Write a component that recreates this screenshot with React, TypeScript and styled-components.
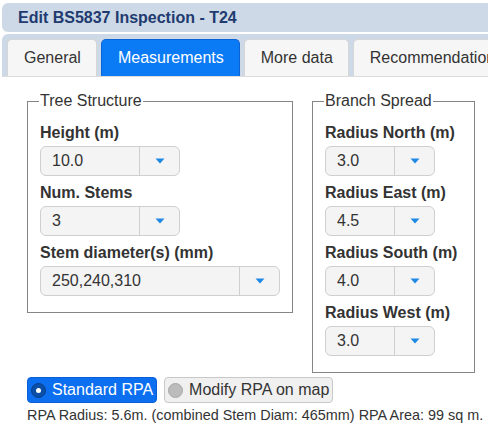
import React from "react";
import styled, { createGlobalStyle } from "styled-components";

const Global = createGlobalStyle`
  html, body { margin: 0; padding: 0; background: #fff; }
  body { font-family: "Liberation Sans", Arial, sans-serif; color: #333; width: 488px; height: 437px; overflow: hidden; }
  * { box-sizing: border-box; }
`;

const Page = styled.div`
  width: 488px;
  padding-left: 2px;
`;

const Header = styled.div`
  margin-top: 3px;
  height: 29px;
  line-height: 29px;
  padding-left: 16px;
  background: #cdd9e7;
  border-radius: 6px 0 0 6px;
  color: #1f3b70;
  font-weight: bold;
  font-size: 16px;
  white-space: nowrap;
`;

const TabBar = styled.div`
  margin-top: 2px;
  height: 43px;
  padding: 5px 0 0 5px;
  background: #cdd9e7;
  border-radius: 6px 0 0 0;
  display: flex;
  gap: 4px;
  overflow: hidden;
  border-bottom: 1px solid #dcdcdc;
`;

const Tab = styled.div<{ $active?: boolean }>`
  flex: none;
  height: 38px;
  line-height: 36px;
  padding: 0 15px 0 16px;
  font-size: 16px;
  white-space: nowrap;
  border-radius: 5px 5px 0 0;
  border: 1px solid ${(p) => (p.$active ? "#0a64d8" : "#d6d6d6")};
  border-bottom: none;
  background: ${(p) => (p.$active ? "#0b7bf5" : "#f6f6f6")};
  color: ${(p) => (p.$active ? "#fff" : "#333")};
`;

const Content = styled.div`
  padding: 15px 0 0 25px;
`;

const Columns = styled.div`
  display: flex;
  align-items: flex-start;
  gap: 19px;
`;

const Fieldset = styled.fieldset<{ $w: number }>`
  width: ${(p) => p.$w}px;
  margin: 0;
  padding: 13px 12px 16px 12px;
  border: 1px solid #858585;
  display: flex;
  flex-direction: column;
  gap: 7px;
`;

const Legend = styled.legend`
  padding: 0 1px;
  margin-left: -1px;
  font-size: 16px;
  line-height: 18px;
  color: #333;
`;

const Field = styled.div`
  display: flex;
  flex-direction: column;
  align-items: flex-start;
  gap: 3px;
`;

const Label = styled.div`
  font-size: 16px;
  line-height: 20px;
  font-weight: bold;
  color: #333;
  white-space: nowrap;
`;

const Select = styled.div<{ $w: number }>`
  width: ${(p) => p.$w}px;
  height: 30px;
  display: flex;
  border: 1px solid #cfcfcf;
  border-radius: 6px;
  background: #f4f4f4;
`;

const Value = styled.div`
  flex: 1;
  padding-left: 11px;
  line-height: 28px;
  font-size: 16px;
  color: #333;
  border-right: 1px solid #cfcfcf;
`;

const Drop = styled.div`
  width: 39px;
  display: flex;
  align-items: center;
  justify-content: center;
`;

const Arrow = () => (
  <svg width="10" height="6" viewBox="0 0 10 6">
    <path d="M0.5 0.5 H9.5 L5 5.5 Z" fill="#1e88e5" />
  </svg>
);

const RadioRow = styled.div`
  display: flex;
  gap: 7px;
  margin-top: 4px;
`;

const RadioBtn = styled.div<{ $on?: boolean }>`
  height: 26px;
  display: flex;
  align-items: center;
  gap: 6px;
  padding: 0 3px 0 3px;
  border-radius: 4px;
  font-size: 16px;
  white-space: nowrap;
  border: 1px solid ${(p) => (p.$on ? "#0a5fd6" : "#c8c8c8")};
  background: ${(p) => (p.$on ? "#0b6ff0" : "#f0f0f0")};
  color: ${(p) => (p.$on ? "#fff" : "#333")};
`;

const Dot = styled.span<{ $on?: boolean }>`
  width: 15px;
  height: 15px;
  border-radius: 50%;
  flex: none;
  display: flex;
  align-items: center;
  justify-content: center;
  background: ${(p) => (p.$on ? "#0a4fa8" : "#bcbcbc")};
  border: 1px solid ${(p) => (p.$on ? "#083f8a" : "#a9a9a9")};
  &::after {
    content: "";
    display: ${(p) => (p.$on ? "block" : "none")};
    width: 5px;
    height: 5px;
    border-radius: 50%;
    background: #fff;
  }
`;

const Summary = styled.div`
  margin-top: 4px;
  font-size: 14.4px;
  line-height: 16px;
  color: #333;
  white-space: nowrap;
`;

const SelectField = ({ label, value, w }: { label: string; value: string; w: number }) => (
  <Field>
    <Label>{label}</Label>
    <Select $w={w}>
      <Value>{value}</Value>
      <Drop>
        <Arrow />
      </Drop>
    </Select>
  </Field>
);

export default function App() {
  return (
    <Page>
      <Global />
      <Header>Edit BS5837 Inspection - T24</Header>
      <TabBar>
        <Tab>General</Tab>
        <Tab $active>Measurements</Tab>
        <Tab>More data</Tab>
        <Tab>Recommendations</Tab>
      </TabBar>
      <Content>
        <Columns>
          <Fieldset $w={266}>
            <Legend>Tree Structure</Legend>
            <SelectField label="Height (m)" value="10.0" w={140} />
            <SelectField label="Num. Stems" value="3" w={140} />
            <SelectField label="Stem diameter(s) (mm)" value="250,240,310" w={240} />
          </Fieldset>
          <Fieldset $w={163}>
            <Legend>Branch Spread</Legend>
            <SelectField label="Radius North (m)" value="3.0" w={110} />
            <SelectField label="Radius East (m)" value="4.5" w={110} />
            <SelectField label="Radius South (m)" value="4.0" w={110} />
            <SelectField label="Radius West (m)" value="3.0" w={110} />
          </Fieldset>
        </Columns>
        <RadioRow>
          <RadioBtn $on>
            <Dot $on />
            Standard RPA
          </RadioBtn>
          <RadioBtn>
            <Dot />
            Modify RPA on map
          </RadioBtn>
        </RadioRow>
        <Summary>RPA Radius: 5.6m. (combined Stem Diam: 465mm) RPA Area: 99 sq m.</Summary>
      </Content>
    </Page>
  );
}
